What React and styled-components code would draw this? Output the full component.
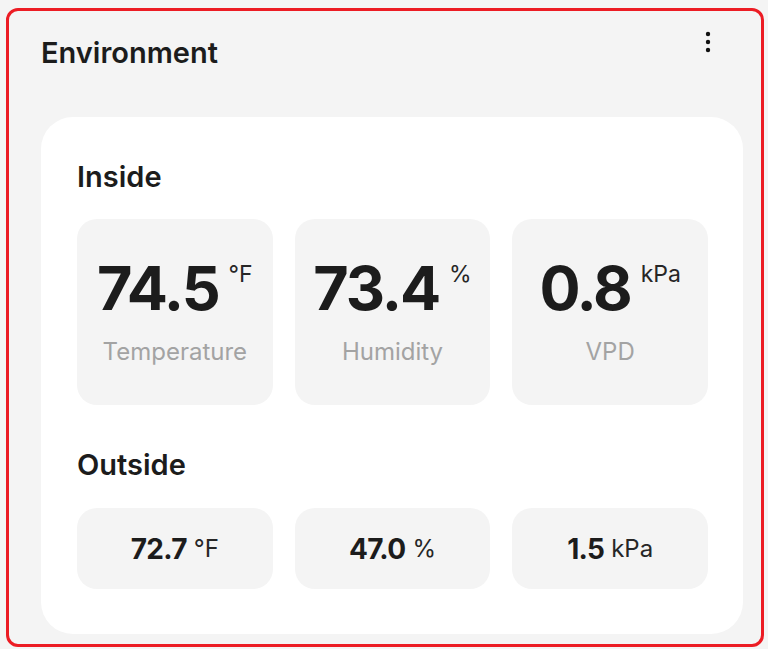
import React from 'react'
import styled, {createGlobalStyle} from 'styled-components'

const Ink = '#1c1c1c'
const Tile = '#f4f4f4'

const GlobalStyle = createGlobalStyle`
html, body {
  margin: 0;
  padding: 0;
  background: #f4f4f4;
  font-family: Inter, "Noto Sans", "Liberation Sans", sans-serif;
  color: ${Ink};
}
* { box-sizing: border-box; }
`

const Card = styled.div`
margin: 8px 0 0 6px;
width: 758px;
height: 639px;
border: 3px solid #ec1c24;
border-radius: 12px;
background: #f4f4f4;
padding: 25px 18px 0 32px;
display: flex;
flex-direction: column;
`
const Header = styled.div`
display: flex;
justify-content: space-between;
align-items: flex-start;
padding-right: 32px;
`
const Title = styled.h2`
margin: 0;
font-size: 29px;
line-height: 34px;
font-weight: 600;
`
const Kebab = styled.button`
border: 0;
background: none;
padding: 0;
margin-top: -5px;
width: 6px;
height: 22px;
display: flex;
cursor: pointer;
`
const Panel = styled.div`
margin-top: 47px;
background: #fff;
border-radius: 32px;
padding: 43px 35px 45px 36px;
`
const Section = styled.h3`
margin: 0;
font-size: 29px;
line-height: 34px;
font-weight: 600;
`
const Grid = styled.div`
display: grid;
grid-template-columns: repeat(3, 1fr);
gap: 22px;
margin-top: ${props => props.$top}px;
margin-bottom: ${props => props.$bottom || 0}px;
`
const BigTile = styled.div`
background: ${Tile};
border-radius: 20px;
height: 186px;
display: flex;
flex-direction: column;
align-items: center;
justify-content: center;
`
const Reading = styled.div`
display: flex;
align-items: flex-start;
`
const BigValue = styled.span`
font-size: 61px;
line-height: 61px;
font-weight: 700;
letter-spacing: -0.035em;
`
const SupUnit = styled.span`
font-size: 23px;
line-height: 23px;
margin: 5px 0 0 10px;
color: #262626;
`
const Label = styled.div`
margin-top: 19px;
font-size: 24px;
line-height: 28px;
color: #a3a3a3;
`
const SmallTile = styled.div`
background: ${Tile};
border-radius: 20px;
height: 81px;
display: flex;
align-items: center;
justify-content: center;
`
const SmallValue = styled.span`
font-size: 28px;
font-weight: 700;
letter-spacing: -0.025em;
`
const Unit = styled.span`
font-size: 24px;
color: #262626;
margin-left: 7px;
`

const inside = [
  {value: '74.5', unit: '°F', label: 'Temperature'},
  {value: '73.4', unit: '%', label: 'Humidity'},
  {value: '0.8', unit: 'kPa', label: 'VPD'},
]
const outside = [
  {value: '72.7', unit: '°F'},
  {value: '47.0', unit: '%'},
  {value: '1.5', unit: 'kPa'},
]

export default function App() {
  return (
    <>
      <GlobalStyle />
      <Card>
        <Header>
          <Title>Environment</Title>
          <Kebab aria-label="More">
            <svg width="6" height="22" viewBox="0 0 6 22">
              <circle cx="3" cy="3" r="2.2" fill="#111" />
              <circle cx="3" cy="11" r="2.2" fill="#111" />
              <circle cx="3" cy="19" r="2.2" fill="#111" />
            </svg>
          </Kebab>
        </Header>
        <Panel>
          <Section>Inside</Section>
          <Grid $top={25} $bottom={43}>
            {inside.map(item => (
              <BigTile key={item.label}>
                <Reading>
                  <BigValue>{item.value}</BigValue>
                  <SupUnit>{item.unit}</SupUnit>
                </Reading>
                <Label>{item.label}</Label>
              </BigTile>
            ))}
          </Grid>
          <Section>Outside</Section>
          <Grid $top={26}>
            {outside.map(item => (
              <SmallTile key={item.unit}>
                <SmallValue>{item.value}</SmallValue>
                <Unit>{item.unit}</Unit>
              </SmallTile>
            ))}
          </Grid>
        </Panel>
      </Card>
    </>
  )
}
